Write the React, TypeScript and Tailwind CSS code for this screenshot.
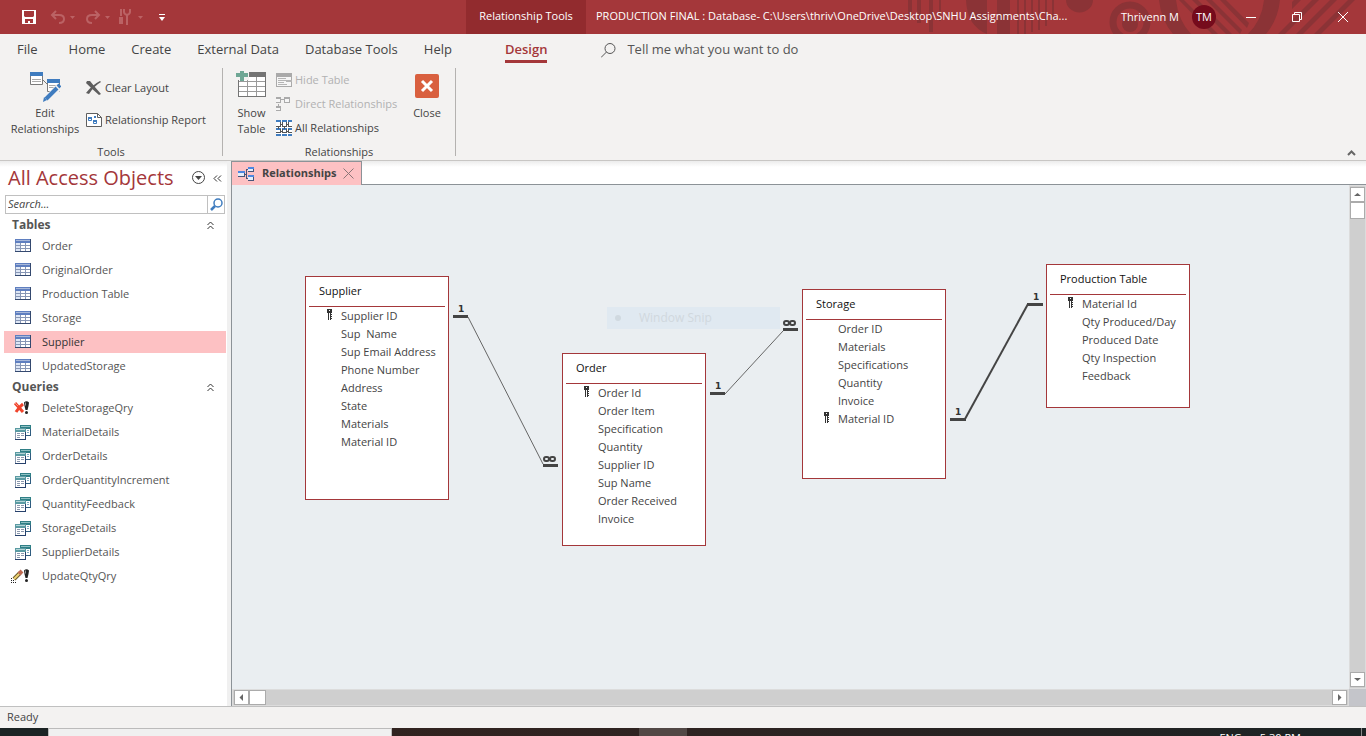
import React, { useState } from 'react';

type IconKind = 'table' | 'select' | 'delete' | 'update';

interface NavItem {
    name: string;
    icon: IconKind;
}

interface TableNode {
    name: string;
    left: number;
    top: number;
    height: number;
    fields: { name: string; isKey?: boolean }[];
}

const RIBBON_TABS = ['Home', 'Create', 'External Data', 'Database Tools', 'Help'];

const NAV_GROUPS: { title: string; items: NavItem[] }[] = [
    {
        title: 'Tables',
        items: [
            { name: 'Order', icon: 'table' },
            { name: 'OriginalOrder', icon: 'table' },
            { name: 'Production Table', icon: 'table' },
            { name: 'Storage', icon: 'table' },
            { name: 'Supplier', icon: 'table' },
            { name: 'UpdatedStorage', icon: 'table' },
        ],
    },
    {
        title: 'Queries',
        items: [
            { name: 'DeleteStorageQry', icon: 'delete' },
            { name: 'MaterialDetails', icon: 'select' },
            { name: 'OrderDetails', icon: 'select' },
            { name: 'OrderQuantityIncrement', icon: 'select' },
            { name: 'QuantityFeedback', icon: 'select' },
            { name: 'StorageDetails', icon: 'select' },
            { name: 'SupplierDetails', icon: 'select' },
            { name: 'UpdateQtyQry', icon: 'update' },
        ],
    },
];

// Node positions are relative to the relationships canvas
const TABLE_NODES: TableNode[] = [
    {
        name: 'Supplier', left: 73, top: 91, height: 224,
        fields: [
            { name: 'Supplier ID', isKey: true }, { name: 'Sup  Name' }, { name: 'Sup Email Address' }, { name: 'Phone Number' },
            { name: 'Address' }, { name: 'State' }, { name: 'Materials' }, { name: 'Material ID' },
        ],
    },
    {
        name: 'Order', left: 330, top: 168, height: 193,
        fields: [
            { name: 'Order Id', isKey: true }, { name: 'Order Item' }, { name: 'Specification' }, { name: 'Quantity' },
            { name: 'Supplier ID' }, { name: 'Sup Name' }, { name: 'Order Received' }, { name: 'Invoice' },
        ],
    },
    {
        name: 'Storage', left: 570, top: 104, height: 190,
        fields: [
            { name: 'Order ID' }, { name: 'Materials' }, { name: 'Specifications' }, { name: 'Quantity' },
            { name: 'Invoice' }, { name: 'Material ID', isKey: true },
        ],
    },
    {
        name: 'Production Table', left: 814, top: 79, height: 144,
        fields: [
            { name: 'Material Id', isKey: true }, { name: 'Qty Produced/Day' }, { name: 'Produced Date' },
            { name: 'Qty Inspection' }, { name: 'Feedback' },
        ],
    },
];

const TitlePattern = () => (
    <svg className="absolute right-0 top-0" width="490" height="34" fill="#8b3336" aria-hidden="true">
        <path d="M32 0h4v20h-4zM41 0h4v23h-4zM53 0h4v32h-4zM63 0h2v21h-2z" />
        <path d="M90 0h21v34q-20-8-21-34zM121 0h13v34h-13zM141 0h2v34h-2zM148 0h2v34h-2zM155 0h2v32h-2zM162 0h2v30h-2zM169 0h2v26h-2zM176 0h2v20h-2z" />
        <path d="M190 0a13 12 0 0 0 27 0z" />
        <circle cx="254" cy="22" r="17" fill="none" stroke="#8b3336" strokeWidth="7" />
        <circle cx="254" cy="24" r="8" />
        <path d="M283 0h17q2 20 15 34h-18q-12-14-14-34zM388 0h16q-2 20-14 34h-18q14-14 16-34z" />
        <path d="M303 0h5l34 34h-6zM316 0h6l34 34h-6zM330 0h6l30 30-2 4zM344 0h6l23 23-2 5z" />
        <path d="M418 0h7l-9 9v-7zM436 0h7l-34 34h-7zM454 0h7l-34 34h-7zM472 0h7l-34 34h-7z" />
    </svg>
);

const TableIcon = () => (
    <svg width="16" height="14" shapeRendering="crispEdges" aria-hidden="true">
        <path fill="#fff" d="M0 0h16v13H0z" />
        <path fill="#dde6f5" d="M0 4h6v9H0z" />
        <path fill="#5f7fc0" d="M0 0h16v4H0z" />
        <path fill="#a9b9da" d="M1 1h14v1H1z" />
        <path fill="#8796b5" d="M0 4h1v9H0zM5 4h1v9H5zM10 4h1v9h-1zM1 6h14v1H1zM1 9h14v1H1z" />
        <path fill="#34496f" d="M15 0h1v13h-1zM0 12h16v1H0z" />
    </svg>
);

const SelectQueryIcon = () => (
    <svg width="16" height="16" shapeRendering="crispEdges" aria-hidden="true">
        <path fill="#fff" d="M6 1h10v10H6z" />
        <path fill="#2f7f86" d="M5 1h11v4H5z" />
        <path fill="#8fc1c3" d="M6 2h9v1H6z" />
        <path fill="#2f5c80" d="M5 5h1v6H5zM15 5h1v7h-1zM6 11h10v1H6z" />
        <path fill="#7eaac0" d="M12 6h2v1h-2zM12 8h2v1h-2zM7 6h3v1H7z" />
        <path fill="#fff" d="M0 5h10v10H0z" />
        <path fill="#5a9aa2" d="M0 4h11v4H0z" />
        <path fill="#b5d5d7" d="M1 5h9v1H1z" />
        <path fill="#8b98ad" d="M0 8h1v7H0zM2 9h3v1H2zM6 9h3v1H6zM2 11h3v1H2zM6 11h3v1H6zM2 13h3v1H2z" />
        <path fill="#27416c" d="M10 8h1v8h-1zM0 15h11v1H0z" />
    </svg>
);

const ExclamationGlyph = () => (
    <>
        <path fill="#222" d="M9 1.500Q11.500-1 14 1.500L13.500 5l-1 4h-2l-1-4z" />
        <path fill="#999" d="M10 1.500h1v3h-1z" />
        <circle cx="11.500" cy="11.500" r="1.500" fill="#222" />
    </>
);

const DeleteQueryIcon = () => (
    <svg width="17" height="14" viewBox="-1 0 17 14" aria-hidden="true">
        <path d="M0 2l8 9M8 3q-4 3-7 8" stroke="#f0442c" strokeWidth="3" fill="none" />
        <path d="M0 2l3 3" stroke="#f79384" />
        <ExclamationGlyph />
    </svg>
);

const UpdateQueryIcon = () => (
    <svg width="20" height="14" viewBox="-4 0 20 14" aria-hidden="true">
        <path d="M-1 10l6-6" stroke="#6b5b2a" strokeWidth="4" />
        <path d="M-1 10l6-6" stroke="#efd374" strokeWidth="2" />
        <path d="M4 5l3-3" stroke="#bf6a52" strokeWidth="4" />
        <path fill="#222" d="M-4 9h1v1h-1zM-4 11h1v1h-1zM-4 13h1v1h-1zM-2 13h1v1h-1zM0 13h1v1H0zM-2 11h1v1h-1z" />
        <ExclamationGlyph />
    </svg>
);

const NavIcon = ({ kind }: { kind: IconKind }) => {
    if (kind === 'table') return <TableIcon />;
    if (kind === 'delete') return <DeleteQueryIcon />;
    if (kind === 'update') return <UpdateQueryIcon />;
    return <SelectQueryIcon />;
};

const KeyIcon = () => (
    <svg width="5" height="11" shapeRendering="crispEdges" aria-label="Primary key" role="img">
        <path fill="#333" d="M0 0h5v4H4v7H3V4H2v7H1V4H0z" />
        <path fill="#333" d="M3 5h2v1H3zM3 7h2v1H3zM3 9h2v1H3z" />
        <path fill="#fff" d="M2 1h1v1H2z" />
    </svg>
);

const EditRelationshipsIcon = () => (
    <svg width="32" height="32" aria-hidden="true">
        <path d="M1.500 1.500h12v11h-12z" fill="#fff" stroke="#7a7a7a" />
        <path fill="#3f7cbf" d="M1 0h13v4H1z" />
        <path d="M3 7.500h9M3 9.500h9" stroke="#aaa" />
        <path d="M14 8l5 5" stroke="#777" />
        <path d="M18.500 8.500h12v11h-12z" fill="#fff" stroke="#7a7a7a" />
        <path fill="#3f7cbf" d="M18 7h13v4H18z" />
        <path d="M20 13.500h8M20 15.500h6" stroke="#aaa" />
        <path d="M16 29l15-15" stroke="#f3f2f1" strokeWidth="7" />
        <path d="M17 27l11-11" stroke="#3f7cbf" strokeWidth="4" />
        <path d="M29 15l2-2" stroke="#3f7cbf" strokeWidth="4" />
        <path fill="#3f7cbf" d="M15 25l3 3-4 2z" />
    </svg>
);

const ClearLayoutIcon = () => (
    <svg width="16" height="14" aria-hidden="true">
        <path d="M1 0h3q4 5 11 13l-2 1Q6 8 0 2z" fill="#5e5e5e" />
        <path d="M14 0l1 1Q8 5 3 13L0 12Q6 4 14 0z" fill="#5e5e5e" />
    </svg>
);

const ReportIcon = () => (
    <svg width="16" height="14" aria-hidden="true">
        <path d="M.5.5h11l4 4v9H.5z" fill="#fff" stroke="#5f5f5f" />
        <path d="M11.500.5v4h4" fill="none" stroke="#5f5f5f" />
        <path d="M2.500 4.500h3v3h-3zM7.500 7.500h3v3h-3z" fill="#fff" stroke="#3f7cbf" />
        <path fill="#3f7cbf" d="M2 4h4v2H2zM7 7h4v2H7zM8 3h2v2H8z" />
    </svg>
);

const ShowTableIcon = () => (
    <svg width="32" height="32" shapeRendering="crispEdges" aria-hidden="true">
        <path fill="#fff" d="M2 3h28v23H2z" />
        <path fill="#747474" d="M2 9h1v17H2zM29 2h1v24h-1zM2 25h28v1H2zM13 1h17v5H13z" />
        <path fill="#9a9a9a" d="M11 7h1v18h-1zM20 6h1v19h-1zM3 10h26v1H3zM3 15h26v1H3zM3 20h26v1H3z" />
        <path fill="#f3f2f1" d="M0 0h13v9H0z" />
        <path fill="#6fa795" d="M4-2h4v4h4v4H8v4H4V6H0V2h4z" />
    </svg>
);

const HideTableIcon = () => (
    <svg width="16" height="14" shapeRendering="crispEdges" aria-hidden="true">
        <path fill="#aaa" d="M0 0h16v14H0z" />
        <path fill="#f6f6f6" d="M1 4h14v9H1z" />
        <path fill="#b5b5b5" d="M2 5h8v1H2zM2 7h11v1H2zM2 9h6v1H2zM2 11h9v1H2zM10 7h6v2h-6z" />
    </svg>
);

const DirectIcon = () => (
    <svg width="16" height="16" shapeRendering="crispEdges" aria-hidden="true">
        <path fill="#aaa" d="M0 1h5v6H0zM8 1h6v6H8zM0 10h5v5H0zM5 3h3v1H5zM2 8h1v2H2z" />
        <path fill="#f6f6f6" d="M0 3h4v3H0zM9 3h4v3H9zM0 12h4v2H0z" />
    </svg>
);

const AllIcon = () => (
    <svg width="16" height="16" shapeRendering="crispEdges" aria-hidden="true">
        <path fill="#fff" d="M0 0h16v16H0z" />
        <path fill="#3f7cbf" d="M0 0h5v2H0zM6 0h5v2H6zM12 0h4v2h-4zM0 8h5v2H0zM6 8h5v2H6zM12 8h4v2h-4zM0 14h5v2H0zM6 14h5v2H6zM12 14h4v2h-4z" />
        <path fill="#555" d="M0 6h5v1H0zM6 6h5v1H6zM12 6h4v1h-4zM0 12h5v1H0zM6 12h5v1H6zM12 12h4v1h-4zM4 2h1v5H4zM6 2h1v5H6zM10 2h1v5h-1zM12 2h1v5h-1zM4 9h1v4H4zM6 9h1v4H6zM10 9h1v4h-1zM12 9h1v4h-1zM2 6h1v3H2zM8 6h1v3H8zM5 4h1v1H5zM11 4h1v1h-1zM5 11h1v1H5zM11 11h1v1h-1z" />
    </svg>
);

const TabIcon = () => (
    <svg width="16" height="14" shapeRendering="crispEdges" aria-hidden="true">
        <path fill="#46557a" d="M0 9h7v1H0zM6 5h1v5H6zM15 0h1v5h-1zM10 4h6v1h-6zM15 8h1v6h-1zM10 13h6v1h-6zM7 7h2v1H7zM8 2h1v9H8zM8 2h2v1H8zM8 11h2v1H8z" />
        <path fill="#e4edfb" d="M0 6h6v3H0zM10 2h5v2h-5zM10 10h5v3h-5z" />
        <path fill="#4d86e0" d="M0 4h7v2H0zM10 0h6v2h-6zM10 8h6v2h-6z" />
    </svg>
);

const DoubleChevronUp = () => (
    <svg width="7" height="9" aria-hidden="true" fill="none" stroke="#333">
        <path d="M.5 4l3-3 3 3M.5 8l3-3 3 3" />
    </svg>
);

const CaretDown = () => (
    <svg width="5" height="3" aria-hidden="true"><path d="M0 0h5L2.500 3z" fill="currentColor" /></svg>
);

const TitleBar = () => (
    <header className="relative flex h-[34px] shrink-0 items-center bg-[#a4373a] text-white">
        <TitlePattern />
        <div className="flex w-[466px] items-center pl-[22px]">
            <button aria-label="Save">
                <svg width="14" height="14" aria-hidden="true">
                    <path fill="#fff" fillRule="evenodd" d="M0 0h14v14H0zM2 1v5l1 1h8l1-1V1zM3 9v4h3v-2h2v2h3V9z" />
                </svg>
            </button>
            <button aria-label="Undo" disabled className="ml-[14px] flex items-center gap-1 text-[#bb6264]">
                <svg width="16" height="14" aria-hidden="true" fill="none" stroke="currentColor" strokeWidth="2">
                    <path d="M6 1L2 5l4 4M2 5h7q5 0 5 4t-5 4" />
                </svg>
                <CaretDown />
            </button>
            <button aria-label="Redo" disabled className="ml-[10px] flex items-center gap-1 text-[#bb6264]">
                <svg width="16" height="14" aria-hidden="true" fill="none" stroke="currentColor" strokeWidth="2">
                    <path d="M10 1l4 4-4 4M14 5H7Q2 5 2 9t5 4" />
                </svg>
                <CaretDown />
            </button>
            <button aria-label="Tools" disabled className="ml-2 flex items-center gap-[7px] text-[#bb6264]">
                <svg width="13" height="16" aria-hidden="true" fill="none" stroke="currentColor" strokeWidth="2">
                    <path d="M3 0v7M9 6v10M6 0v3q0 2 3 3 3-1 3-3V0" />
                    <path d="M3 8v7" strokeWidth="4" />
                </svg>
                <CaretDown />
            </button>
            <button aria-label="Customize Quick Access Toolbar" className="ml-4">
                <svg width="6" height="7" aria-hidden="true" fill="#fff"><path d="M0 0h6v1H0zM0 3h6L3 7z" /></svg>
            </button>
        </div>
        <div className="flex h-full w-[120px] items-center justify-center bg-[#922b2e] pb-[2px] text-[11px]">Relationship Tools</div>
        <h1 className="relative min-w-0 flex-1 truncate pb-[2px] pl-[10px] text-[11px]">
            PRODUCTION FINAL : Database- C:\Users\thriv\OneDrive\Desktop\SNHU Assignments\Cha...
        </h1>
        <div className="relative flex w-[277px] items-center pl-8">
            <span className="w-[71px] whitespace-nowrap text-[11px]">Thrivenn M</span>
            <span className="flex size-6 items-center justify-center rounded-full bg-[#750b1c] text-[11px]">TM</span>
            <button aria-label="Minimize" className="ml-[30px] h-px w-[10px] bg-white" />
            <button aria-label="Restore" className="ml-9">
                <svg width="10" height="10" aria-hidden="true" fill="none" stroke="#fff"><path d="M.5 2.500h7v7h-7zM2.500 2V.5h7v7H8" /></svg>
            </button>
            <button aria-label="Close window" className="ml-9">
                <svg width="10" height="10" aria-hidden="true" fill="none" stroke="#fff"><path d="M0 0l10 10M10 0L0 10" /></svg>
            </button>
        </div>
    </header>
);

const RibbonTabs = () => (
    <nav className="flex h-8 shrink-0 items-center bg-[#f3f2f1] text-[13px] text-[#444]">
        <div className="flex w-[505px] gap-[26px] pl-[17px]">
            <button className="pr-[5px]">File</button>
            {RIBBON_TABS.map((tab) => (
                <button key={tab} className="whitespace-nowrap">{tab}</button>
            ))}
        </div>
        <button className="h-[25px] border-b-[3px] border-[#a4373a] font-semibold leading-5 text-[#a4373a]">Design</button>
        <button className="ml-[54px] flex items-center gap-[11px] text-[#555]">
            <svg width="15" height="15" aria-hidden="true" fill="none" stroke="#555">
                <circle cx="9" cy="5.500" r="5" />
                <path d="M5.500 9L0 14.500" />
            </svg>
            Tell me what you want to do
        </button>
    </nav>
);

const Ribbon = () => (
    <section className="flex h-[95px] shrink-0 border-b border-[#c8c6c4] bg-[#f3f2f1] pb-1 text-[11px] leading-4 text-[#444]">
        <div className="mt-[2px] flex w-[223px] flex-col border-r border-[#b4b2b0]">
            <div className="flex flex-1">
                <button className="flex w-[86px] flex-col items-center pl-1 pt-1">
                    <EditRelationshipsIcon />
                    <span className="pt-px">Edit<br />Relationships</span>
                </button>
                <div className="flex flex-col items-start gap-4 pt-3">
                    <button className="flex items-center gap-[3px] whitespace-nowrap"><ClearLayoutIcon />Clear Layout</button>
                    <button className="flex items-center gap-[3px] whitespace-nowrap"><ReportIcon />Relationship Report</button>
                </div>
            </div>
            <p className="-mb-1 text-center">Tools</p>
        </div>
        <div className="mt-[2px] flex w-[233px] flex-col border-r border-[#b4b2b0]">
            <div className="flex flex-1">
                <button className="flex w-[53px] flex-col items-center pl-1 pt-1">
                    <span className="-mt-px"><ShowTableIcon /></span>
                    <span className="pt-[2px]">Show<br />Table</span>
                </button>
                <div className="flex w-[127px] flex-col items-start gap-2 pt-1">
                    <button disabled className="flex items-center gap-[3px] whitespace-nowrap text-[#b1b1b1]"><HideTableIcon />Hide Table</button>
                    <button disabled className="flex items-center gap-[3px] whitespace-nowrap text-[#b1b1b1]"><DirectIcon />Direct Relationships</button>
                    <button className="flex items-center gap-[3px] whitespace-nowrap"><AllIcon />All Relationships</button>
                </div>
                <button className="flex w-12 flex-col items-center pt-[6px]">
                    <svg width="24" height="24" aria-hidden="true">
                        <rect width="24" height="24" rx="2" fill="#d9603f" />
                        <path d="M7 7l10 10M17 7L7 17" stroke="#fff" strokeWidth="3" />
                    </svg>
                    <span className="pt-[7px]">Close</span>
                </button>
            </div>
            <p className="-mb-1 text-center">Relationships</p>
        </div>
        <div className="flex flex-1 items-end justify-end pr-[10px]">
            <button aria-label="Collapse the Ribbon">
                <svg width="9" height="7" aria-hidden="true" fill="none" stroke="#666" strokeWidth="2"><path d="M1 6l3.500-3.500L8 6" /></svg>
            </button>
        </div>
    </section>
);

const NavigationPane = ({ selected, onSelect }: { selected: string; onSelect: (name: string) => void }) => (
    <aside className="flex w-[232px] shrink-0 flex-col border-r border-[#8c9297] bg-gradient-to-b from-[#ececec] to-white to-[6px]">
        <div className="flex-1 border-r-4 border-[#f0f0f0]">
            <div className="flex h-[34px] items-center pl-2 pr-[5px]">
                <h2 className="flex-1 whitespace-nowrap text-[20px] text-[#a4373a]">All Access Objects</h2>
                <button aria-label="Choose objects" className="mr-2 pb-[2px]">
                    <svg width="13" height="13" aria-hidden="true">
                        <circle cx="6.500" cy="6.500" r="6" fill="none" stroke="#444" />
                        <path d="M3 5h7L6.500 9z" fill="#444" />
                    </svg>
                </button>
                <button aria-label="Close navigation pane">
                    <svg width="9" height="7" aria-hidden="true" fill="none" stroke="#333"><path d="M4 .5l-3 3 3 3M8 .5l-3 3 3 3" /></svg>
                </button>
            </div>
            <div className="ml-[5px] mr-[2px] flex h-[19px] border border-[#c0c0c0] bg-white">
                <input
                    type="text"
                    aria-label="Search objects"
                    placeholder="Search..."
                    className="min-w-0 flex-1 pl-[2px] text-[11px] italic outline-none placeholder:text-[#444]"
                />
                <button aria-label="Search" className="flex w-[17px] items-center justify-center border-l border-[#c0c0c0]">
                    <svg width="13" height="13" aria-hidden="true" fill="none" stroke="#3f7cbf">
                        <circle cx="8" cy="5" r="4" strokeWidth="1.500" />
                        <path d="M5 8l-4 4" strokeWidth="2.500" />
                    </svg>
                </button>
            </div>
            <div className="pt-[2px]">
                {NAV_GROUPS.map((group) => (
                    <section key={group.title}>
                        <h3 className="flex h-[18px] items-center justify-between pl-3 pr-[13px] text-xs font-bold text-[#555]">
                            {group.title}
                            <button aria-label={`Collapse ${group.title}`}><DoubleChevronUp /></button>
                        </h3>
                        <ul>
                            {group.items.map((item) => (
                                <li key={item.name} className="py-px pl-1 pr-px">
                                    <button
                                        onClick={() => onSelect(item.name)}
                                        className={`flex h-[22px] w-full items-center text-[11px] ${item.name === selected ? 'bg-[#fdc1c3] text-[#333]' : 'text-[#555]'}`}
                                    >
                                        <span className="flex w-[38px] justify-end pb-px pr-[11px]"><NavIcon kind={item.icon} /></span>
                                        {item.name}
                                    </button>
                                </li>
                            ))}
                        </ul>
                    </section>
                ))}
            </div>
        </div>
    </aside>
);

const TableCard = ({ node }: { node: TableNode }) => (
    <article
        className="absolute w-36 border border-[#a4373a] bg-white"
        style={{ left: node.left, top: node.top, height: node.height }}
    >
        <h3 className="mx-[3px] flex h-[30px] items-center border-b border-[#a4373a] pl-[10px] text-[11px] text-[#111]">{node.name}</h3>
        <ul>
            {node.fields.map((field) => (
                <li key={field.name} className="flex h-[18px] items-center whitespace-pre text-[11px] text-[#444]">
                    <span className="flex w-[35px] shrink-0 justify-end pb-1 pr-[9px]">{field.isKey && <KeyIcon />}</span>
                    {field.name}
                </li>
            ))}
        </ul>
    </article>
);

// "Many" end marker, two small rings side by side
const ManyMarker = ({ x, y }: { x: number; y: number }) => (
    <g fill="none" stroke="#444" strokeWidth="2">
        <rect x={x + 1} y={y + 1} width="5" height="4" rx="2" />
        <rect x={x + 7} y={y + 1} width="5" height="4" rx="2" />
    </g>
);

const JoinLines = () => (
    <svg className="absolute left-0 top-0" width="1117" height="503" aria-hidden="true">
        <g fill="#444">
            <path d="M221 130h15v3h-15zM311 279h15v3h-15zM478 207h15v3h-15zM551 143h15v3h-15zM718 233h16v3h-16zM795 118h16v3h-16z" />
        </g>
        <g stroke="#666" strokeWidth="1">
            <path d="M236 132l75 147M493 209l58-63" />
            <path d="M733 234l63-115" stroke="#444" strokeWidth="2" />
        </g>
        <ManyMarker x={311} y={271} />
        <ManyMarker x={551} y={135} />
        <g fill="#333" className="font-['DejaVu_Sans',sans-serif] text-[9px] font-bold">
            <text x="226" y="127">1</text>
            <text x="483" y="204">1</text>
            <text x="723" y="230">1</text>
            <text x="801" y="115">1</text>
        </g>
    </svg>
);

const ScrollButton = ({ label, path }: { label: string; path: string }) => (
    <button aria-label={label} className="flex size-[15px] shrink-0 items-center justify-center border border-[#ababab] bg-white">
        <svg width="7" height="7" aria-hidden="true"><path d={path} fill="#666" /></svg>
    </button>
);

const RelationshipsView = () => (
    <main className="flex min-w-0 flex-1 flex-col bg-white">
        <div className="flex h-6 shrink-0 border-b border-[#8c9297] bg-gradient-to-b from-[#ececec] to-white to-[6px]">
            <button className="-mb-px flex h-6 w-[130px] items-center border-r border-t border-[#8c9297] bg-[#fdc1c3] pl-[6px] text-[11px] font-bold text-[#444]">
                <TabIcon />
                <span className="flex-1 pl-2 text-left">Relationships</span>
                <svg width="11" height="11" className="mr-[7px]" aria-hidden="true" fill="none" stroke="#8a7577"><path d="M.5.5l10 10M10.500.5l-10 10" /></svg>
            </button>
        </div>
        <div className="grid min-h-0 flex-1 grid-cols-[1fr_17px] grid-rows-[1fr_17px]">
            <div className="relative overflow-hidden bg-[#eaeef1]">
                <JoinLines />
                <div className="absolute left-[375px] top-[122px] flex h-[22px] w-[173px] items-center bg-[#e0e9f1] text-xs text-[#d0d8de]">
                    <span className="ml-2 size-[6px] rounded-full bg-[#d0d9e0]" />
                    <span className="pl-[18px]">Window Snip</span>
                </div>
                {TABLE_NODES.map((node) => <TableCard key={node.name} node={node} />)}
            </div>
            <div className="flex flex-col items-center border border-[#dcdcdc] bg-[#cfcfcf] py-px">
                <ScrollButton label="Scroll up" path="M0 5h7L3.500 2z" />
                <div className="h-[17px] w-[15px] border border-[#ababab] bg-white" />
                <div className="flex-1" />
                <ScrollButton label="Scroll down" path="M0 2h7L3.500 5z" />
            </div>
            <div className="flex items-center border border-[#dcdcdc] bg-[#cfcfcf] px-px">
                <ScrollButton label="Scroll left" path="M5 0v7L1.500 3.500z" />
                <div className="h-[15px] w-[17px] border border-[#ababab] bg-white" />
                <div className="flex-1" />
                <ScrollButton label="Scroll right" path="M2 0v7l3.500-3.500z" />
            </div>
            <div className="bg-[#c4c5ca]" />
        </div>
    </main>
);

const Taskbar = () => (
    <footer className="flex h-2 shrink-0 overflow-hidden bg-gradient-to-r from-[#35241f] via-[#2e2321] to-[#1b2324] text-[11px] text-white">
        <div className="w-12 bg-[#1b2324]" />
        <div className="w-[344px] border border-b-0 border-[#bbb] bg-[#f0f0f0]" />
        <div className="ml-[247px] w-12 bg-[#514845]" />
        <div className="flex flex-1 items-start justify-end gap-[18px] pr-[60px] pt-[2px] leading-4">
            <span>ENG</span>
            <span>5:30 PM</span>
        </div>
        <div className="w-[5px] border-l border-[#888]" />
    </footer>
);

const App: React.FC = () => {
    const [selected, setSelected] = useState('Supplier');

    return (
        <div className="flex h-screen flex-col overflow-hidden bg-white font-['Open_Sans',sans-serif]">
            <TitleBar />
            <RibbonTabs />
            <Ribbon />
            <div className="flex min-h-0 flex-1">
                <NavigationPane selected={selected} onSelect={setSelected} />
                <RelationshipsView />
            </div>
            <div className="flex h-[22px] shrink-0 items-center border-t border-[#c0c0c0] bg-[#f3f2f1] pl-[7px] text-[11px] text-[#444]">Ready</div>
            <Taskbar />
        </div>
    );
};

export default App;
